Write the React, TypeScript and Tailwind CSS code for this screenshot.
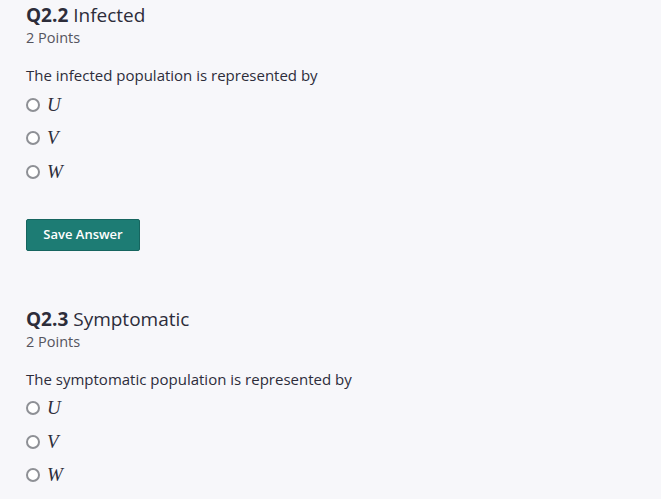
const options = ["U", "V", "W"];

function Radio({ label }: { label: string }) {
  return (
    <label className="flex items-center h-[33.5px]">
      <span className="w-[14px] h-[14px] rounded-full border-2 border-[#8e9095] bg-white" />
      <span className="ml-[7px] text-[19px] italic text-[#2d2d3a] [font-family:'Liberation_Serif',serif]">
        {label}
      </span>
    </label>
  );
}

function Question({
  num,
  title,
  prompt,
  withButton,
}: {
  num: string;
  title: string;
  prompt: string;
  withButton?: boolean;
}) {
  return (
    <div>
      <h2 className="text-[19px] leading-[24px] text-[#2d2d3a]">
        <span className="font-bold">{num}</span> {title}
      </h2>
      <div className="mt-[1px] text-[14.5px] leading-[20px] text-[#55555e]">2 Points</div>
      <p className="mt-[17px] text-[15px] leading-[20px] text-[#2d2d3a]">{prompt}</p>
      <div className="mt-[3px] flex flex-col">
        {options.map((o) => (
          <Radio key={o} label={o} />
        ))}
      </div>
      {withButton && (
        <button className="mt-[30px] w-[114px] h-[32px] rounded-[2px] bg-[#1d7c74] border border-[#16655f] text-white text-[13px] font-semibold">
          Save Answer
        </button>
      )}
    </div>
  );
}

export default function App() {
  return (
    <div className="min-h-[499px] bg-[#f7f7fa] px-[26px] pt-[3px] [font-family:'Open_Sans',sans-serif]">
      <Question
        num="Q2.2"
        title="Infected"
        prompt="The infected population is represented by"
        withButton
      />
      <div className="mt-[56px]">
        <Question
          num="Q2.3"
          title="Symptomatic"
          prompt="The symptomatic population is represented by"
        />
      </div>
    </div>
  );
}
